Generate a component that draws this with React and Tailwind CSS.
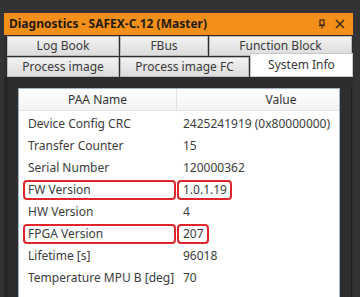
import React from 'react';

const rows = [
  { name: 'Device Config CRC', value: '2425241919 (0x80000000)' },
  { name: 'Transfer Counter', value: '15' },
  { name: 'Serial Number', value: '120000362' },
  { name: 'FW Version', value: '1.0.1.19', marked: true },
  { name: 'HW Version', value: '4' },
  { name: 'FPGA Version', value: '207', marked: true },
  { name: 'Lifetime [s]', value: '96018' },
  { name: 'Temperature MPU B [deg]', value: '70' },
];

const Tab = ({ label, className = '' }) => (
  <div
    className={`h-[20px] flex items-center justify-center whitespace-nowrap border border-[#b9b9b9] bg-gradient-to-b from-[#f2f2f2] to-[#dcdcdc] text-[12px] text-[#3a3a3a] ${className}`}
  >
    {label}
  </div>
);

export default function App() {
  return (
    <div
      className="w-[360px] h-[297px] overflow-hidden bg-[#333336] pt-[13px] pl-[4px]"
      style={{ fontFamily: '"Noto Sans", "Open Sans", sans-serif' }}
    >
      <div className="w-[349px] h-[284px] flex flex-col bg-[#2d2d30]">
        {/* Title bar */}
        <div className="h-[22px] bg-[#f4901a] flex items-center justify-between pl-[5px] pr-[8px]">
          <span className="text-[12px] font-bold text-[#241a0e] whitespace-nowrap">
            Diagnostics - SAFEX-C.12 (Master)
          </span>
          <div className="flex items-center gap-[9px] text-[#3a2a14]">
            <svg width="8" height="10" viewBox="0 0 8 10">
              <rect x="2" y="1" width="4" height="5" fill="none" stroke="currentColor" strokeWidth="1.2" />
              <rect x="1" y="6" width="6" height="1.2" fill="currentColor" />
              <rect x="3.5" y="7" width="1" height="3" fill="currentColor" />
            </svg>
            <svg width="10" height="10" viewBox="0 0 10 10">
              <path d="M1 1 L9 9 M9 1 L1 9" stroke="currentColor" strokeWidth="1.5" />
            </svg>
          </div>
        </div>

        {/* Tabs */}
        <div className="flex flex-col gap-[1px] pl-[3px] pt-[1px] bg-[#2d2d30]">
          <div className="flex gap-[1px]">
            <Tab label="Log Book" className="w-[112px]" />
            <Tab label="FBus" className="w-[88px]" />
            <Tab label="Function Block" className="w-[143px]" />
          </div>
          <div className="flex gap-[1px] items-end h-[20px]">
            <Tab label="Process image" className="w-[112px]" />
            <Tab label="Process image FC" className="w-[129px]" />
            <div className="w-[103px] h-[24px] -mt-[4px] flex items-center justify-center whitespace-nowrap bg-white border border-[#c8c8c8] text-[12px] text-[#3a3a3a]">
              System Info
            </div>
          </div>
        </div>

        {/* Content */}
        <div className="flex-1 flex pt-[11px] pl-[10px] bg-[#2d2d30] border-l-[4px] border-[#262628]">
          <div className="w-[322px] h-full bg-white border border-[#9fb3c8] border-b-0 overflow-hidden">
            <div className="flex w-[370px] h-[22px] border-b border-[#e4e4e4] bg-gradient-to-b from-white to-[#f3f3f3] text-[12px] text-[#333]">
              <div className="w-[158px] flex items-center justify-center border-r border-[#e4e4e4]">PAA Name</div>
              <div className="w-[208px] flex items-center justify-center">Value</div>
            </div>
            <div className="pt-[2px]">
              {rows.map((r) => (
                <div key={r.name} className="flex h-[22px] text-[12px] text-[#3c3c3c] whitespace-nowrap">
                  <div className="w-[158px] shrink-0 flex items-center pl-[4px]">
                    <span
                      className={`flex items-center w-[153px] h-[20px] pl-[3px] rounded-[4px] border-2 ${
                        r.marked ? 'border-[#e0262b]' : 'border-transparent'
                      }`}
                    >
                      {r.name}
                    </span>
                  </div>
                  <div className="flex items-center">
                    <span
                      className={`flex items-center h-[20px] pl-[4px] pr-[3px] rounded-[4px] border-2 ${
                        r.marked ? 'border-[#e0262b]' : 'border-transparent'
                      }`}
                    >
                      {r.value}
                    </span>
                  </div>
                </div>
              ))}
            </div>
          </div>
          <div className="flex-1 flex">
            <div className="w-[11px] bg-[#2e2e30]" />
            <div className="w-[1px] bg-[#222224]" />
          </div>
        </div>
      </div>
    </div>
  );
}
